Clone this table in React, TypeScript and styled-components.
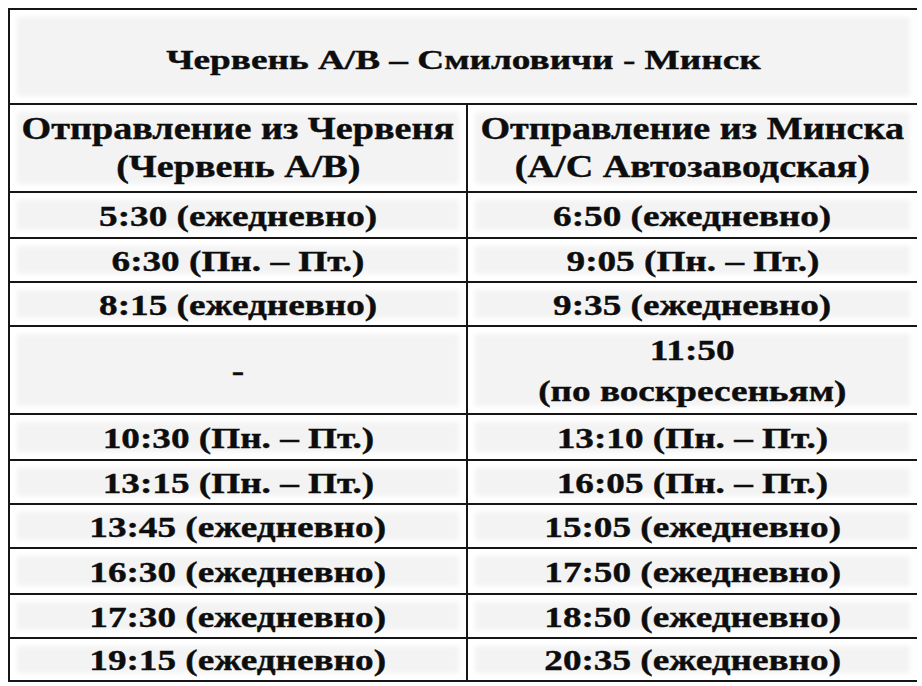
import React from "react";
import styled, { createGlobalStyle } from "styled-components";

const Global = createGlobalStyle`
  html, body { margin: 0; padding: 0; background: #ffffff; }
  body { padding: 8px; font-family: "Liberation Serif", "Times New Roman", serif; color: #111; }
`;

const Table = styled.div`
  width: 909px;
  box-sizing: border-box;
  display: grid;
  grid-template-columns: 456px 449px;
  gap: 2px;
  padding: 2px;
  background: #161616;
`;

const Cell = styled.div<{ $h: number; $span?: boolean; $padTop?: number }>`
  grid-column: ${(p) => (p.$span ? "1 / -1" : "auto")};
  height: ${(p) => p.$h}px;
  box-sizing: border-box;
  padding-top: ${(p) => p.$padTop ?? 0}px;
  background: #f3f3f3;
  box-shadow: inset 0 0 5px 7px #ffffff;
  display: flex;
  flex-direction: column;
  align-items: center;
  justify-content: center;
  font-weight: 700;
  text-align: center;
  white-space: nowrap;
`;

const Text = styled.span<{ $size: number; $sx: number; $lh?: string }>`
  display: inline-block;
  font-family: "Liberation Serif", "Times New Roman", serif;
  font-weight: 700;
  font-size: ${(p) => p.$size}px;
  line-height: ${(p) => p.$lh ?? "1.15"};
  color: #0d0d0d;
  -webkit-text-stroke: 0.4px #0d0d0d;
  transform: scaleX(${(p) => p.$sx});
`;

const rows: { h: number; l: string[]; r: string[] }[] = [
  { h: 44, l: ["5:30 (ежедневно)"], r: ["6:50 (ежедневно)"] },
  { h: 42, l: ["6:30 (Пн. – Пт.)"], r: ["9:05 (Пн. – Пт.)"] },
  { h: 42, l: ["8:15 (ежедневно)"], r: ["9:35 (ежедневно)"] },
  { h: 86, l: ["-"], r: ["11:50", "(по воскресеньям)"] },
  { h: 44, l: ["10:30 (Пн. – Пт.)"], r: ["13:10 (Пн. – Пт.)"] },
  { h: 42, l: ["13:15 (Пн. – Пт.)"], r: ["16:05 (Пн. – Пт.)"] },
  { h: 42, l: ["13:45 (ежедневно)"], r: ["15:05 (ежедневно)"] },
  { h: 44, l: ["16:30 (ежедневно)"], r: ["17:50 (ежедневно)"] },
  { h: 42, l: ["17:30 (ежедневно)"], r: ["18:50 (ежедневно)"] },
  { h: 41, l: ["19:15 (ежедневно)"], r: ["20:35 (ежедневно)"] },
];

export default function App() {
  return (
    <>
      <Global />
      <Table>
        <Cell $h={93} $span $padTop={7}>
          <Text $size={28} $sx={1.33}>Червень А/В – Смиловичи - Минск</Text>
        </Cell>
        <Cell $h={86}>
          <Text $size={31} $sx={1.23} $lh="38px">Отправление из Червеня</Text>
          <Text $size={31} $sx={1.23} $lh="38px">(Червень А/В)</Text>
        </Cell>
        <Cell $h={86}>
          <Text $size={31} $sx={1.23} $lh="38px">Отправление из Минска</Text>
          <Text $size={31} $sx={1.23} $lh="38px">(А/С Автозаводская)</Text>
        </Cell>
        {rows.map((row, i) => (
          <React.Fragment key={i}>
            <Cell $h={row.h}>
              {row.l.map((t, j) => (
                <Text key={j} $size={30} $sx={1.24} $lh="41px">{t}</Text>
              ))}
            </Cell>
            <Cell $h={row.h}>
              {row.r.map((t, j) => (
                <Text key={j} $size={30} $sx={1.24} $lh="41px">{t}</Text>
              ))}
            </Cell>
          </React.Fragment>
        ))}
      </Table>
    </>
  );
}
